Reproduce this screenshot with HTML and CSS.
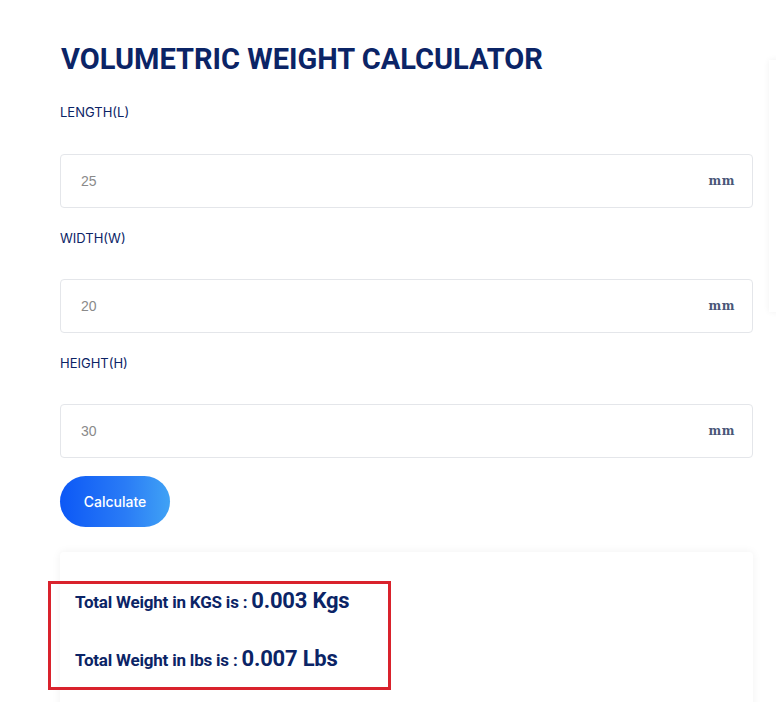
FILE: index.html
```html
<!DOCTYPE html>
<html lang="en">
  <head>
    <meta charset="UTF-8" />
    <meta name="viewport" content="width=device-width, initial-scale=1.0" />
    <title>Volumetric Weight Calculator</title>
    <link rel="stylesheet" href="styles.css">
  </head>
  <body>
    <div class="calc">
      <h2 class="title">VOLUMETRIC WEIGHT CALCULATOR</h2>

      <label class="label first">LENGTH(L)</label>
      <div class="field">
        <span class="value">25</span>
        <span class="unit">mm</span>
      </div>

      <label class="label">WIDTH(W)</label>
      <div class="field">
        <span class="value">20</span>
        <span class="unit">mm</span>
      </div>

      <label class="label">HEIGHT(H)</label>
      <div class="field">
        <span class="value">30</span>
        <span class="unit">mm</span>
      </div>

      <button class="btn">Calculate</button>

      <div class="result">
        <div class="line">Total Weight in KGS is : <span class="num">0.003 Kgs</span></div>
        <div class="line">Total Weight in lbs is : <span class="num">0.007 Lbs</span></div>
        <div class="mark"></div>
      </div>
    </div>
    <div class="side"></div>
  </body>
</html>
```

FILE: styles.css
```css
body {
  margin: 0;
  background: #fff;
  font-family: "Open Sans", sans-serif;
  overflow: hidden;
}
.calc {
  display: flex;
  flex-direction: column;
  width: 693px;
  padding: 40px 0 0 60px;
}
.title {
  margin: 0 0 0 1px;
  font-family: Roboto, sans-serif;
  font-weight: 700;
  font-size: 29px;
  line-height: 38px;
  color: #0b2466;
}
.label {
  display: block;
  height: 71px;
  padding-top: 22px;
  font-family: Inter, sans-serif;
  font-size: 13px;
  line-height: 16px;
  color: #0b2466;
  box-sizing: border-box;
}
.label.first {
  height: 76px;
  padding-top: 26px;
}
.field {
  display: flex;
  align-items: center;
  justify-content: space-between;
  height: 54px;
  padding: 0 17px 0 20px;
  border: 1px solid #e4e6ea;
  border-radius: 4px;
  box-sizing: border-box;
}
.value {
  font-family: "Liberation Sans", sans-serif;
  font-size: 14px;
  color: #8a8a8a;
}
.unit {
  font-family: "DejaVu Serif", serif;
  font-weight: 700;
  font-size: 12px;
  color: #4a5778;
  letter-spacing: 0.5px;
}
.btn {
  align-self: flex-start;
  margin-top: 18px;
  width: 110px;
  height: 51px;
  border: none;
  border-radius: 26px;
  background: linear-gradient(90deg, #0c58f6 0%, #2a7cf6 60%, #40a2f5 100%);
  color: #fff;
  font-family: Inter, sans-serif;
  font-size: 14px;
  font-weight: 500;
}
.result {
  position: relative;
  margin-top: 25px;
  padding: 36px 15px 40px;
  border-radius: 4px;
  box-shadow: 0 0 10px rgba(0, 0, 0, 0.06);
  display: flex;
  flex-direction: column;
  gap: 31px;
}
.line {
  font-family: Roboto, sans-serif;
  font-weight: 700;
  font-size: 17px;
  line-height: 25px;
  color: #0b2466;
  letter-spacing: -0.2px;
}
.num {
  font-size: 22px;
}
.mark {
  position: absolute;
  left: -12px;
  top: 29px;
  width: 337px;
  height: 103px;
  border: 3px solid #d9222c;
}
.side {
  position: absolute;
  top: 60px;
  left: 769px;
  width: 20px;
  height: 252px;
  box-shadow: 0 0 6px rgba(0, 0, 0, 0.06);
}
```
